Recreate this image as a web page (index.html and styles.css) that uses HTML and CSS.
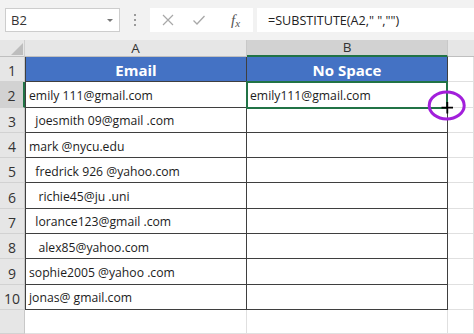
FILE: index.html
```html
<!DOCTYPE html>
<html lang="en">
<head>
<meta charset="utf-8">
<title>Excel SUBSTITUTE</title>
<link rel="stylesheet" href="styles.css">
</head>
<body>
<div class="toolbar">
  <div class="namebox"><span>B2</span><span class="caret"></span></div>
  <div class="dots"><i></i><i></i><i></i></div>
  <div class="fbtns">
    <svg class="ico" width="14" height="14" viewBox="0 0 14 14"><path d="M2 2 L12 12 M12 2 L2 12" stroke="#a8a8a8" stroke-width="1.2" fill="none"/></svg>
    <svg class="ico" width="14" height="14" viewBox="0 0 14 14"><path d="M1.5 7.5 L5 11 L12.5 3" stroke="#a8a8a8" stroke-width="1.3" fill="none"/></svg>
    <span class="fx"><i>f</i><em>x</em></span>
  </div>
  <div class="formula">=SUBSTITUTE(A2," ","")</div>
</div>
<div class="sheet">
  <div class="corner"><svg width="25" height="17" viewBox="0 0 25 17"><polygon points="23,3 23,15 11,15" fill="#bdbdbd"/></svg></div>
  <div class="ch">A</div>
  <div class="ch sel">B</div>
  <div class="ch blank"></div>

  <div class="rh">1</div>
  <div class="c hd ca">Email</div>
  <div class="c hd">No Space</div>
  <div class="x"></div>

  <div class="rh sel">2</div>
  <div class="c ca">emily 111@gmail.com</div>
  <div class="c">emily111@gmail.com</div>
  <div class="x"></div>

  <div class="rh">3</div>
  <div class="c ca">  joesmith 09@gmail .com</div>
  <div class="c"></div>
  <div class="x"></div>

  <div class="rh">4</div>
  <div class="c ca">mark @nycu.edu</div>
  <div class="c"></div>
  <div class="x"></div>

  <div class="rh">5</div>
  <div class="c ca">  fredrick 926 @yahoo.com</div>
  <div class="c"></div>
  <div class="x"></div>

  <div class="rh">6</div>
  <div class="c ca">   richie45@ju .uni</div>
  <div class="c"></div>
  <div class="x"></div>

  <div class="rh">7</div>
  <div class="c ca">  lorance123@gmail .com</div>
  <div class="c"></div>
  <div class="x"></div>

  <div class="rh">8</div>
  <div class="c ca">   alex85@yahoo.com</div>
  <div class="c"></div>
  <div class="x"></div>

  <div class="rh">9</div>
  <div class="c ca">sophie2005 @yahoo .com</div>
  <div class="c"></div>
  <div class="x"></div>

  <div class="rh">10</div>
  <div class="c ca">jonas@ gmail.com</div>
  <div class="c"></div>
  <div class="x"></div>

  <div class="rh"></div>
  <div class="x"></div>
  <div class="x"></div>
  <div class="x"></div>

  <div class="active"></div>
  <svg class="mark" width="44" height="34" viewBox="0 0 44 34">
    <ellipse cx="20.7" cy="15.5" rx="17.5" ry="13.5" fill="none" stroke="#a21fdb" stroke-width="3"/>
    <path d="M21.3 12 V23.5 M15.5 17.7 H27" stroke="#000" stroke-width="1.8" fill="none"/>
  </svg>
</div>
</body>
</html>
```
FILE: styles.css
```css
* { box-sizing: border-box; }
html, body { margin: 0; padding: 0; }
body {
  width: 474px;
  height: 334px;
  overflow: hidden;
  background: #fff;
  font-family: "Open Sans", "Noto Sans", sans-serif;
  color: #1c1c1c;
}
.toolbar {
  height: 40px;
  background: #f2f2f2;
  display: flex;
  align-items: center;
  padding-left: 5px;
}
.namebox {
  width: 115px;
  height: 24px;
  background: #fff;
  border: 1px solid #cdcdcd;
  display: flex;
  align-items: center;
  padding-left: 5px;
  font-size: 13px;
  color: #333;
}
.caret {
  margin-left: auto;
  margin-right: 6px;
  border-left: 3px solid transparent;
  border-right: 3px solid transparent;
  border-top: 3px solid #777;
}
.dots {
  width: 30px;
  display: flex;
  flex-direction: column;
  align-items: center;
  gap: 3px;
}
.dots i {
  width: 2px;
  height: 2px;
  background: #9a9a9a;
}
.fbtns {
  width: 103px;
  height: 24px;
  background: #fff;
  display: flex;
  align-items: center;
  padding-left: 11px;
}
.ico { display: block; }
.ico + .ico { margin-left: 17px; }
.fx {
  margin-left: 25px;
  font-family: "Liberation Serif", serif;
  font-size: 15px;
  color: #555;
  font-style: italic;
}
.fx i { font-style: italic; }
.fx em { font-style: italic; font-size: 11px; position: relative; top: 2px; }
.formula {
  flex: 1;
  margin-left: 4px;
  height: 24px;
  background: #fff;
  display: flex;
  align-items: center;
  padding-left: 11px;
  font-size: 12.6px;
  color: #222;
  white-space: pre;
}
.sheet {
  position: relative;
  display: grid;
  grid-template-columns: 25px 222px 201px 1fr;
  grid-template-rows: 17px repeat(10, 25.3px) 1fr;
  height: 294px;
}
.corner {
  background: #e6e6e6;
  border-right: 1px solid #cfcfcf;
  border-bottom: 1px solid #bfbfbf;
}
.corner svg { display: block; }
.ch {
  background: #e6e6e6;
  border-right: 1px solid #c8c8c8;
  border-bottom: 1px solid #bfbfbf;
  font-size: 13.5px;
  line-height: 16px;
  text-align: center;
  color: #333;
}
.ch.sel {
  background: #d2d2d2;
  border-bottom: 2px solid #217346;
  line-height: 15px;
}
.ch.blank { border-right: none; }
.rh {
  background: #e6e6e6;
  border-right: 1px solid #c8c8c8;
  border-bottom: 1px solid #d2d2d2;
  font-size: 14px;
  color: #333;
  display: flex;
  align-items: center;
  justify-content: center;
  padding-top: 3px;
}
.rh.sel {
  background: #d2d2d2;
  border-right: 2px solid #217346;
}
.c {
  border-right: 1px solid #3f3f3f;
  border-bottom: 1px solid #3f3f3f;
  font-size: 12.2px;
  white-space: pre;
  display: flex;
  align-items: center;
  padding-left: 3px;
  padding-top: 2px;
}
.c.ca { border-left: 1px solid #3f3f3f; }
.c.hd {
  background: #4472c4;
  color: #fff;
  font-weight: 700;
  font-size: 15px;
  justify-content: center;
  padding-left: 0;
}
.x {
  border-right: 1px solid #e0e0e0;
  border-bottom: 1px solid #e0e0e0;
}
.active {
  position: absolute;
  left: 246px;
  top: 41px;
  width: 202px;
  height: 27.5px;
  border: 2px solid #217346;
  pointer-events: none;
}
.mark {
  position: absolute;
  left: 426px;
  top: 50px;
}
```
